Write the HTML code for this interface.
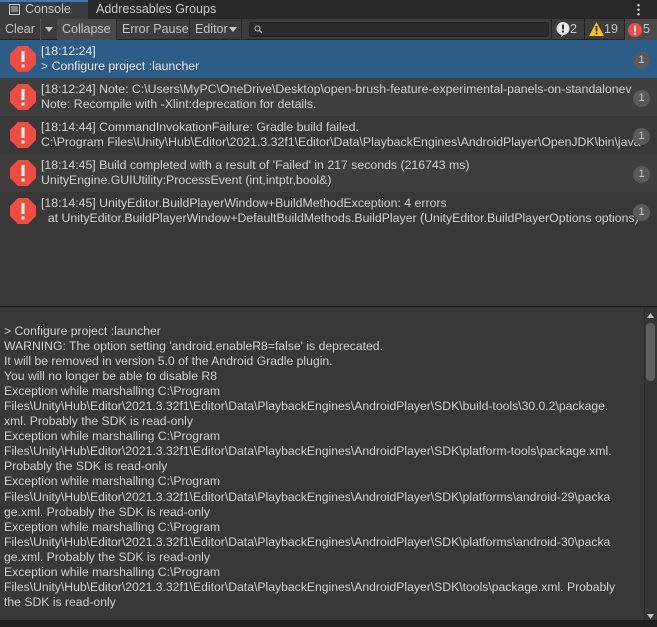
<!DOCTYPE html><html><head><style>
*{margin:0;padding:0;box-sizing:border-box}
body{width:657px;height:627px;background:#383838;font-family:"Liberation Sans",sans-serif;font-size:12px;color:#d2d2d2;position:relative;overflow:hidden}
.abs{position:absolute}
.tabbar{top:0;left:0;width:657px;height:19px;background:#282828}
.tab{top:0;height:19px;line-height:19px;font-size:12.5px;color:#c8c8c8}
.tb{top:19px;left:0;width:657px;height:21px;background:#3c3c3c;border-bottom:1px solid #232323}
.btn{top:19px;height:21px;line-height:21px;font-size:12.5px;color:#c4c4c4;padding-left:5px;border-right:1px solid #2a2a2a}
.row{left:0;width:657px;height:38px}
.row .ic{position:absolute;left:10px;top:6px;width:26px;height:26px}
.row .t{position:absolute;left:41px;top:4px;line-height:15px;white-space:nowrap;font-size:12.3px}
.badge{position:absolute;left:633px;top:12px;width:17px;height:17px;border-radius:50%;background:#5a5a5a;color:#c8c8c8;font-size:11px;text-align:center;line-height:17px}
.det{left:4px;top:324px;line-height:15.05px;font-size:12.2px;white-space:pre;color:#d2d2d2}
</style></head><body>
<div class="abs tabbar"></div>
<div class="abs" style="left:0;top:0;width:88px;height:19px;background:#3c3c3c;border-top:2px solid #3a79bb"></div>
<svg class="abs" style="left:9px;top:4px" width="11" height="11"><rect x="0.5" y="0.5" width="10" height="10" fill="none" stroke="#c8c8c8"/><path d="M2 3h7M2 5h7M2 7h7" stroke="#c8c8c8"/></svg>
<div class="abs tab" style="left:25px">Console</div>
<div class="abs tab" style="left:96px">Addressables Groups</div>
<div class="abs" style="left:637px;top:3px;width:3px;height:13px;background:radial-gradient(circle,#ccc 1px,transparent 1.5px) 0 0/3px 4.5px"></div>
<div class="abs tb"></div>
<div class="abs btn" style="left:0;width:41px;border-right:1px solid #555">Clear</div>
<svg class="abs" style="left:45px;top:27px" width="9" height="6"><path d="M0 0h8L4 5z" fill="#c4c4c4"/></svg>
<div class="abs btn" style="left:57px;width:60px;background:#4a4a4a">Collapse</div>
<div class="abs btn" style="left:117px;width:73px">Error Pause</div>
<div class="abs btn" style="left:190px;width:52px">Editor</div>
<svg class="abs" style="left:229px;top:27px" width="9" height="6"><path d="M0 0h8L4 5z" fill="#c4c4c4"/></svg>
<div class="abs" style="left:249px;top:22px;width:300px;height:15px;background:#2a2a2a;border:1px solid #212121;border-radius:3px"></div>
<svg class="abs" style="left:254px;top:25px" width="9" height="9"><circle cx="3.5" cy="3.5" r="2.5" fill="none" stroke="#bbb"/><path d="M5.5 5.5l2.5 2.5" stroke="#bbb" stroke-width="1.3"/></svg>
<div class="abs" style="left:551px;top:19px;width:1px;height:21px;background:#222"></div>
<svg class="abs" style="left:556px;top:22px" width="14" height="15"><circle cx="7" cy="6.5" r="6.5" fill="#e8e8e8"/><path d="M6 12l-1 3 4-3z" fill="#e8e8e8"/><rect x="6" y="2.5" width="2" height="5" fill="#333"/><rect x="6" y="8.5" width="2" height="2" fill="#333"/></svg>
<div class="abs btn" style="left:570px;width:14px;padding:0;border:none">2</div>
<div class="abs" style="left:584px;top:19px;width:1px;height:21px;background:#222"></div>
<svg class="abs" style="left:589px;top:22px" width="15" height="14"><path d="M7.5 0L15 14H0z" fill="#f5c518"/><rect x="6.6" y="4" width="1.8" height="5.5" fill="#333"/><rect x="6.6" y="10.5" width="1.8" height="1.8" fill="#333"/></svg>
<div class="abs btn" style="left:604px;width:20px;padding:0;border:none">19</div>
<div class="abs" style="left:624px;top:19px;width:33px;height:21px;background:#4a4a4a;border-left:1px solid #222"></div>
<svg class="abs" style="left:628px;top:23px" width="14" height="14"><circle cx="7" cy="7" r="7" fill="#f04a4a"/><rect x="6" y="2.5" width="2" height="6" fill="#fff"/><rect x="6" y="9.8" width="2" height="2" fill="#fff"/></svg>
<div class="abs btn" style="left:643px;width:14px;padding:0;border:none">5</div>

<div class="abs row" style="top:40px;background:#2c5d87"><svg class="ic" viewBox="0 0 26 26"><path d="M8 0h10l8 8v10l-8 8H8l-8-8V8z" fill="#f04c44"/><rect x="11.5" y="5" width="3" height="11" fill="#fff"/><rect x="11.5" y="18.5" width="3" height="3" fill="#fff"/></svg><div class="t" style="color:#eaeaea">[18:12:24]<br>&gt; Configure project :launcher</div><div class="badge">1</div></div>
<div class="abs row" style="top:78px;background:#3e3e3e"><svg class="ic" viewBox="0 0 26 26"><path d="M8 0h10l8 8v10l-8 8H8l-8-8V8z" fill="#f04c44"/><rect x="11.5" y="5" width="3" height="11" fill="#fff"/><rect x="11.5" y="18.5" width="3" height="3" fill="#fff"/></svg><div class="t">[18:12:24] Note: C:\Users\MyPC\OneDrive\Desktop\open-brush-feature-experimental-panels-on-standalonev<br>Note: Recompile with -Xlint:deprecation for details.</div><div class="badge">1</div></div>
<div class="abs row" style="top:116px;background:#383838"><svg class="ic" viewBox="0 0 26 26"><path d="M8 0h10l8 8v10l-8 8H8l-8-8V8z" fill="#f04c44"/><rect x="11.5" y="5" width="3" height="11" fill="#fff"/><rect x="11.5" y="18.5" width="3" height="3" fill="#fff"/></svg><div class="t">[18:14:44] CommandInvokationFailure: Gradle build failed.<br>C:\Program Files\Unity\Hub\Editor\2021.3.32f1\Editor\Data\PlaybackEngines\AndroidPlayer\OpenJDK\bin\java</div><div class="badge">1</div></div>
<div class="abs row" style="top:154px;background:#3e3e3e"><svg class="ic" viewBox="0 0 26 26"><path d="M8 0h10l8 8v10l-8 8H8l-8-8V8z" fill="#f04c44"/><rect x="11.5" y="5" width="3" height="11" fill="#fff"/><rect x="11.5" y="18.5" width="3" height="3" fill="#fff"/></svg><div class="t">[18:14:45] Build completed with a result of 'Failed' in 217 seconds (216743 ms)<br>UnityEngine.GUIUtility:ProcessEvent (int,intptr,bool&amp;)</div><div class="badge">1</div></div>
<div class="abs row" style="top:192px;background:#383838"><svg class="ic" viewBox="0 0 26 26"><path d="M8 0h10l8 8v10l-8 8H8l-8-8V8z" fill="#f04c44"/><rect x="11.5" y="5" width="3" height="11" fill="#fff"/><rect x="11.5" y="18.5" width="3" height="3" fill="#fff"/></svg><div class="t">[18:14:45] UnityEditor.BuildPlayerWindow+BuildMethodException: 4 errors<br>&nbsp;&nbsp;at UnityEditor.BuildPlayerWindow+DefaultBuildMethods.BuildPlayer (UnityEditor.BuildPlayerOptions options)</div><div class="badge">1</div></div>

<div class="abs" style="left:0;top:306px;width:657px;height:1px;background:#1e1e1e"></div>
<div class="abs" style="left:0;top:307px;width:657px;height:1px;background:#2e2e2e"></div>
<div class="abs det">&gt; Configure project :launcher
WARNING: The option setting 'android.enableR8=false' is deprecated.
It will be removed in version 5.0 of the Android Gradle plugin.
You will no longer be able to disable R8
Exception while marshalling C:\Program
Files\Unity\Hub\Editor\2021.3.32f1\Editor\Data\PlaybackEngines\AndroidPlayer\SDK\build-tools\30.0.2\package.
xml. Probably the SDK is read-only
Exception while marshalling C:\Program
Files\Unity\Hub\Editor\2021.3.32f1\Editor\Data\PlaybackEngines\AndroidPlayer\SDK\platform-tools\package.xml.
Probably the SDK is read-only
Exception while marshalling C:\Program
Files\Unity\Hub\Editor\2021.3.32f1\Editor\Data\PlaybackEngines\AndroidPlayer\SDK\platforms\android-29\packa
ge.xml. Probably the SDK is read-only
Exception while marshalling C:\Program
Files\Unity\Hub\Editor\2021.3.32f1\Editor\Data\PlaybackEngines\AndroidPlayer\SDK\platforms\android-30\packa
ge.xml. Probably the SDK is read-only
Exception while marshalling C:\Program
Files\Unity\Hub\Editor\2021.3.32f1\Editor\Data\PlaybackEngines\AndroidPlayer\SDK\tools\package.xml. Probably
the SDK is read-only</div>
<div class="abs" style="left:644px;top:308px;width:13px;height:312px;background:#353535;border-left:1px solid #2c2c2c"></div>
<svg class="abs" style="left:647px;top:313px" width="8" height="5"><path d="M0 5h7L3.5 0z" fill="#c0c0c0"/></svg>
<div class="abs" style="left:646px;top:323px;width:9px;height:58px;border-radius:4px;background:#5f5f5f"></div>
<svg class="abs" style="left:647px;top:614px" width="8" height="5"><path d="M0 0h7L3.5 5z" fill="#c0c0c0"/></svg>
<div class="abs" style="left:0;top:620px;width:657px;height:7px;background:#1f1f1f"></div>
</body></html>
